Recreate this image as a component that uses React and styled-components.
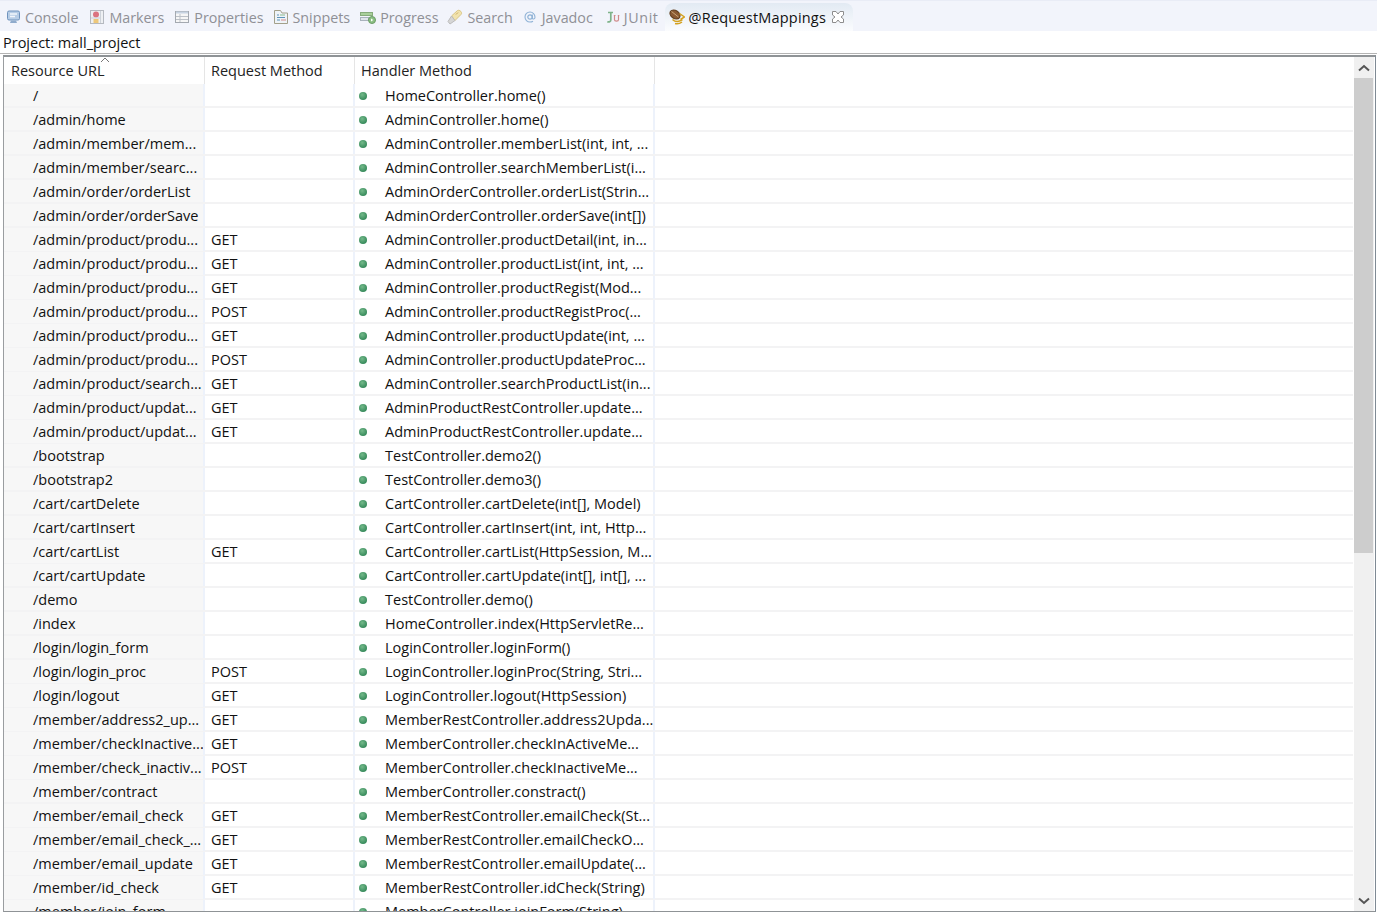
import React from 'react';
import styled, { createGlobalStyle } from 'styled-components';

const GlobalStyle = createGlobalStyle`
  html, body {
    margin: 0;
    padding: 0;
    height: 100%;
    overflow: hidden;
    background: #fff;
  }
  body {
    font-family: "Open Sans", "Noto Sans", sans-serif;
    font-size: 14.5px;
    color: #111;
  }
`;

const ROWS = [
  ['/', '', 'HomeController.home()'],
  ['/admin/home', '', 'AdminController.home()'],
  ['/admin/member/mem...', '', 'AdminController.memberList(int, int, ...'],
  ['/admin/member/searc...', '', 'AdminController.searchMemberList(i...'],
  ['/admin/order/orderList', '', 'AdminOrderController.orderList(Strin...'],
  ['/admin/order/orderSave', '', 'AdminOrderController.orderSave(int[])'],
  ['/admin/product/produ...', 'GET', 'AdminController.productDetail(int, in...'],
  ['/admin/product/produ...', 'GET', 'AdminController.productList(int, int, ...'],
  ['/admin/product/produ...', 'GET', 'AdminController.productRegist(Mod...'],
  ['/admin/product/produ...', 'POST', 'AdminController.productRegistProc(...'],
  ['/admin/product/produ...', 'GET', 'AdminController.productUpdate(int, ...'],
  ['/admin/product/produ...', 'POST', 'AdminController.productUpdateProc...'],
  ['/admin/product/search...', 'GET', 'AdminController.searchProductList(in...'],
  ['/admin/product/updat...', 'GET', 'AdminProductRestController.update...'],
  ['/admin/product/updat...', 'GET', 'AdminProductRestController.update...'],
  ['/bootstrap', '', 'TestController.demo2()'],
  ['/bootstrap2', '', 'TestController.demo3()'],
  ['/cart/cartDelete', '', 'CartController.cartDelete(int[], Model)'],
  ['/cart/cartInsert', '', 'CartController.cartInsert(int, int, Http...'],
  ['/cart/cartList', 'GET', 'CartController.cartList(HttpSession, M...'],
  ['/cart/cartUpdate', '', 'CartController.cartUpdate(int[], int[], ...'],
  ['/demo', '', 'TestController.demo()'],
  ['/index', '', 'HomeController.index(HttpServletRe...'],
  ['/login/login_form', '', 'LoginController.loginForm()'],
  ['/login/login_proc', 'POST', 'LoginController.loginProc(String, Stri...'],
  ['/login/logout', 'GET', 'LoginController.logout(HttpSession)'],
  ['/member/address2_up...', 'GET', 'MemberRestController.address2Upda...'],
  ['/member/checkInactive...', 'GET', 'MemberController.checkInActiveMe...'],
  ['/member/check_inactiv...', 'POST', 'MemberController.checkInactiveMe...'],
  ['/member/contract', '', 'MemberController.constract()'],
  ['/member/email_check', 'GET', 'MemberRestController.emailCheck(St...'],
  ['/member/email_check_...', 'GET', 'MemberRestController.emailCheckO...'],
  ['/member/email_update', 'GET', 'MemberRestController.emailUpdate(...'],
  ['/member/id_check', 'GET', 'MemberRestController.idCheck(String)'],
  ['/member/join_form', '', 'MemberController.joinForm(String)'],
];

const Page = styled.div`
  height: 914px;
  display: flex;
  flex-direction: column;
  overflow: hidden;
`;

const TabBar = styled.div`
  height: 31px;
  box-sizing: border-box;
  padding-top: 2px;
  background: #f2f4fb;
  border-top: 1px solid #e9ecf6;
  display: flex;
  align-items: stretch;
`;

const Tab = styled.div`
  display: flex;
  align-items: center;
  gap: ${p => p.$gap ?? 4}px;
  margin-left: ${p => p.$left ?? 0}px;
  padding-right: 6px;
  color: #8f9096;
  font-size: 14.3px;
  letter-spacing: ${p => p.$track || 0}px;
  white-space: nowrap;
`;

const ActiveTab = styled.div`
  display: flex;
  align-items: center;
  gap: 4px;
  padding: 0 7px 0 4px;
  border-radius: 8px 8px 0 0;
  background: linear-gradient(#e2eaf3, #fbfcfe);
  color: #111;
  letter-spacing: 0.2px;
  white-space: nowrap;
`;

const Icon = styled.svg`
  width: 16px;
  height: 16px;
  flex: none;
  display: block;
`;

const ProjectLabel = styled.div`
  height: 22px;
  padding: 1px 0 0 3px;
  box-sizing: border-box;
  line-height: 22px;
`;

const TopRule = styled.div`
  height: 1px;
  background: #b4b4b4;
`;

const TableFrame = styled.div`
  flex: 1;
  min-height: 0;
  margin: 1px 1px 2px 3px;
  display: flex;
  background: #fff;
  border: 1px solid #8f9396;
  border-top: 2px solid #8f9396;
  border-left-color: #9a9da0;
  border-right-color: #7f8a94;
`;

const TableArea = styled.div`
  flex: 1;
  min-width: 0;
  margin-right: 1px;
  overflow: hidden;
`;

const HeaderRow = styled.div`
  height: 27px;
  display: grid;
  grid-template-columns: 201px 150px 300px;
  line-height: 27px;
`;

const HeaderCell = styled.div`
  position: relative;
  padding-left: ${p => p.$pad}px;
  border-right: 1px solid #e5e5e5;
  color: #222;
`;

const SortCaret = styled.svg`
  position: absolute;
  left: 96px;
  top: 0;
  width: 10px;
  height: 6px;
`;

const Row = styled.div`
  height: 24px;
  box-sizing: border-box;
  display: grid;
  grid-template-columns: 201px 150px 300px;
  border-bottom: 2px solid #f3f3f4;
  line-height: 23px;
  white-space: nowrap;
`;

const UrlCell = styled.div`
  padding-left: 29px;
  background: #f7f7f7;
  border-right: 2px solid #edf2fb;
  overflow: hidden;
`;

const MethodCell = styled.div`
  padding-left: 6px;
  border-right: 2px solid #edf2fb;
`;

const HandlerCell = styled.div`
  display: flex;
  align-items: center;
  padding-left: 4px;
  border-right: 2px solid #edf2fb;
  overflow: hidden;
`;

const Bullet = styled.span`
  flex: none;
  width: 8px;
  height: 8px;
  margin: 1px 18px 0 0;
  border-radius: 50%;
  background: radial-gradient(circle at 40% 35%, #74b98a, #35895a 75%);
`;

const Scrollbar = styled.div`
  width: 20px;
  margin-right: 1px;
  flex: none;
  background: #f0f0f0;
  display: flex;
  flex-direction: column;
`;

const ScrollArrow = styled.div`
  height: 21px;
  flex: none;
  display: flex;
  align-items: center;
  justify-content: center;
`;

const ScrollThumb = styled.div`
  height: 475px;
  margin-right: 1px;
  flex: none;
  background: #cdcdcd;
`;

const ScrollTrack = styled.div`
  flex: 1;
`;

const ConsoleIcon = () => (
  <Icon viewBox="0 0 16 16">
    <rect x="1.500" y="2" width="12" height="9" rx="1.500" fill="#b7cde6" stroke="#6f93bd" />
    <path d="M4 5h7M4 7.500h5" stroke="#f2f6fb" strokeWidth="1.400" />
    <path d="M5 11.500h5l1 2.500H4z" fill="#8fabcc" />
  </Icon>
);

const MarkersIcon = () => (
  <Icon viewBox="0 0 16 16">
    <rect x="1.500" y="1.500" width="13" height="13" fill="#eef0f3" stroke="#b5b9c0" />
    <circle cx="7" cy="5.500" r="3" fill="#db7480" />
    <rect x="4.500" y="10" width="5" height="4" fill="#edc77a" />
    <path d="M11.500 2v12M2 9h9" stroke="#cdd2d9" />
  </Icon>
);

const PropertiesIcon = () => (
  <Icon viewBox="0 0 16 16">
    <rect x="1.500" y="2.500" width="13" height="11" fill="#f6f6f6" stroke="#a4a9b0" />
    <path d="M2 3.500h12" stroke="#c7d3e2" strokeWidth="2" />
    <path d="M6 5v8M2 7.500h12M2 10.500h12" stroke="#bcc1c8" />
  </Icon>
);

const SnippetsIcon = () => (
  <Icon viewBox="0 0 16 16">
    <path d="M1.500 1.500h6l1.500 2.500h5.500v10.500h-13z" fill="#eef3f8" stroke="#a3a08a" />
    <path d="M4 6h2M4 8.500h8M4 11h3" stroke="#5c93b8" />
    <path d="M8 11h5" stroke="#d38b8b" />
    <path d="M7 6h5" stroke="#8dbb8d" />
  </Icon>
);

const ProgressIcon = () => (
  <Icon viewBox="0 0 16 16">
    <rect x="0.500" y="3.500" width="12" height="3" fill="#a8cf9a" stroke="#86ab7b" />
    <rect x="0.500" y="8.500" width="8" height="3" fill="#dfe5ea" stroke="#a9b3bc" />
    <circle cx="12" cy="11" r="3.500" fill="#8cc084" stroke="#6c9c66" />
    <path d="M11 9.500v3l2.300-1.500z" fill="#fff" />
  </Icon>
);

const SearchIcon = () => (
  <Icon viewBox="0 0 16 16">
    <path d="M4.500 7 10.500 1.500c1.500-.8 3.500.5 4 2 .3 1-.2 1.700-.8 2.300L8 11.500z" fill="#f1e3ae" stroke="#d9c585" />
    <path d="M4.500 7 1 12.500 3 15l5-3.500z" fill="#d6d6d6" stroke="#bcbcbc" />
    <path d="M9 5.500l2-2" stroke="#c9a95e" />
  </Icon>
);

const JavadocIcon = () => (
  <Icon viewBox="0 0 16 16">
    <circle cx="8" cy="8" r="2.200" fill="none" stroke="#8fb2d6" strokeWidth="1.200" />
    <path d="M10.300 5.500v3.500c0 1.600 2.700 1.400 2.700-.8C13 5.300 10.800 3 8 3S3 5.300 3 8s2.200 5 5 5c1.200 0 2.200-.3 3-.8" fill="none" stroke="#8fb2d6" strokeWidth="1.100" />
  </Icon>
);

const JUnitIcon = () => (
  <Icon viewBox="0 0 16 16">
    <path d="M3 3.500h5M5.800 3.500v7.500c0 1.800-1.800 2.300-3.500 1.700" fill="none" stroke="#7fb38a" strokeWidth="1.700" />
    <path d="M9.500 6.500v4.300c0 1.800 4 1.800 4 0V6.500M8.800 6.500h1.700M12.800 6.500h1.500" fill="none" stroke="#d08a8a" strokeWidth="1.200" />
  </Icon>
);

const BeanIcon = () => (
  <Icon viewBox="0 0 16 16">
    <ellipse cx="6" cy="5.500" rx="5.500" ry="4" transform="rotate(35 6 5.500)" fill="#8a5a34" stroke="#5f3d1e" />
    <path d="M2.500 2.500 9.500 8" stroke="#c9a87a" />
    <path d="M3.500 10.500c2.500 2.500 6 2.800 10 .2M6 14.500c2.500.6 5 0 7-1.500M10.500 4.500l5 3.500-4 2.500" fill="none" stroke="#d4a11e" strokeWidth="1.500" />
  </Icon>
);

const CloseIcon = () => (
  <Icon viewBox="0 0 16 16">
    <path d="M2.500 2.500h3.500L8 5l2-2.500h3.500V6L11 8l2.500 2V13.500H10L8 11l-2 2.500H2.500V10L5 8 2.500 6z" fill="#fff" stroke="#8d8d8d" />
  </Icon>
);

const Chevron = ({ down }) => (
  <svg width="12" height="8" viewBox="0 0 12 8">
    <path d={down ? 'M1 1.500 6 6l5-4.500' : 'M1 6.500 6 2l5 4.500'} fill="none" stroke="#555" strokeWidth="2" />
  </svg>
);

const App = () => (
  <Page>
    <GlobalStyle />
    <TabBar>
      <Tab $left={6} $gap={3}><ConsoleIcon />Console</Tab>
      <Tab $left={5}><MarkersIcon />Markers</Tab>
      <Tab $left={4}><PropertiesIcon />Properties</Tab>
      <Tab $left={3}><SnippetsIcon />Snippets</Tab>
      <Tab $left={4}><ProgressIcon />Progress</Tab>
      <Tab $left={3}><SearchIcon />Search</Tab>
      <Tab $left={3} $gap={4}><JavadocIcon />Javadoc</Tab>
      <Tab $left={6} $gap={3} $track={0.6}><JUnitIcon />JUnit</Tab>
      <ActiveTab><BeanIcon />@RequestMappings<CloseIcon /></ActiveTab>
    </TabBar>
    <ProjectLabel>Project: mall_project</ProjectLabel>
    <TopRule />
    <TableFrame>
      <TableArea>
        <HeaderRow>
          <HeaderCell $pad={7}>
            Resource URL
            <SortCaret viewBox="0 0 10 6">
              <path d="M1 5 5 1l4 4" fill="none" stroke="#777" />
            </SortCaret>
          </HeaderCell>
          <HeaderCell $pad={6}>Request Method</HeaderCell>
          <HeaderCell $pad={6}>Handler Method</HeaderCell>
        </HeaderRow>
        {ROWS.map(([url, method, handler], i) => (
          <Row key={i}>
            <UrlCell>{url}</UrlCell>
            <MethodCell>{method}</MethodCell>
            <HandlerCell><Bullet />{handler}</HandlerCell>
          </Row>
        ))}
      </TableArea>
      <Scrollbar>
        <ScrollArrow><Chevron /></ScrollArrow>
        <ScrollThumb />
        <ScrollTrack />
        <ScrollArrow><Chevron down /></ScrollArrow>
      </Scrollbar>
    </TableFrame>
  </Page>
);

export default App;
